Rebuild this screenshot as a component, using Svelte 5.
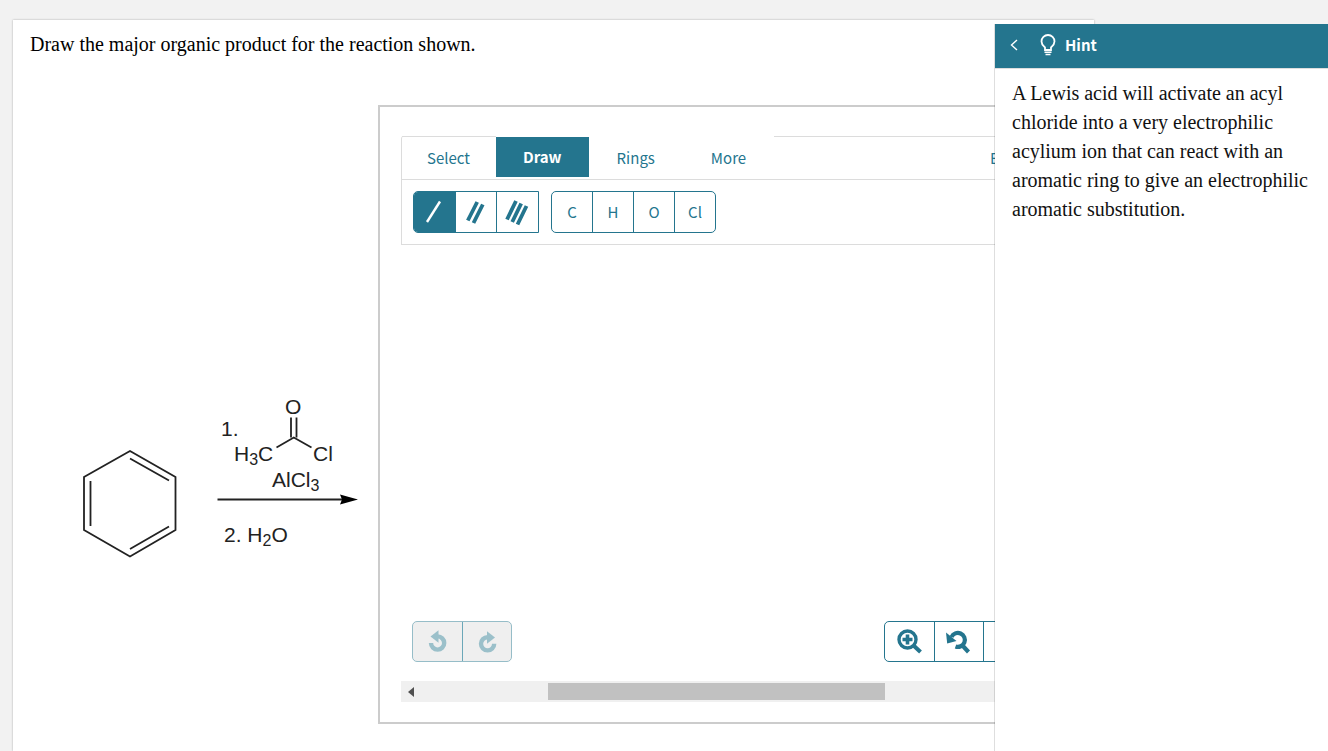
<script>
  let activeTab = $state("Draw");
  let activeBond = $state("Single");
  let hintOpen = $state(true);

  const tabs = ["Select", "Draw", "Rings", "More"];
  const atoms = ["C", "H", "O", "Cl"];
  const bonds = [
    { name: "Single", width: 2.4, path: "M8 25L21 4.500" },
    { name: "Double", width: 3.8, path: "M6.800 23.500L16.200 5M12.500 26L21.800 7.500" },
    { name: "Triple", width: 3.8, path: "M4 22.500L13 4M9.200 25L18.200 6.500M14.500 27.500L23.500 9" },
  ];

  // horizontal scroll position of the canvas, in percent of the track
  const scroll = { start: 20.6, size: 54.8 };
</script>

<main class="page">
  <p class="question">Draw the major organic product for the reaction shown.</p>

  <div class="workspace">
    <svg class="reaction" viewBox="0 0 300 170" role="img" aria-label="Reaction scheme">
      <!-- Benzene -->
      <g class="bond">
        <path d="M60 57L105.500 83v53L60 162.500L14 136V83z" />
        <path d="M60 64.500L99 86.500M99 132.500L60 155M20.500 87v45" />
      </g>

      <!-- Acetyl chloride -->
      <g class="bond">
        <path d="M221 23.500v20M226.500 23.500v20" />
        <path d="M206.500 53.500L223.800 43.500L241.500 53.500" />
      </g>
      <text x="215" y="20">O</text>
      <text x="151" y="42">1.</text>
      <text x="164" y="67">H<tspan class="sub" dy="4">3</tspan><tspan dy="-4">C</tspan></text>
      <text x="243" y="67">Cl</text>
      <text x="202" y="93">AlCl<tspan class="sub" dy="4">3</tspan></text>

      <!-- Arrow -->
      <path class="bond" d="M147.500 105.500H276" />
      <path class="arrow-head" d="M270 100.500L288 105.500L270 110.500L272 105.500z" />
      <text x="154" y="148">2. H<tspan class="sub" dy="4">2</tspan><tspan dy="-4">O</tspan></text>
    </svg>

    <section class="editor">
      <div class="tabs">
        {#each tabs as tab}
          <button class="tab" class:active={activeTab === tab} onclick={() => (activeTab = tab)}>{tab}</button>
        {/each}
        <div class="tabs-rest">
          <button class="tab">Erase</button>
        </div>
      </div>

      <div class="tools">
        <div class="group bonds">
          {#each bonds as bond}
            <button
              class:active={activeBond === bond.name}
              aria-label="{bond.name} bond"
              onclick={() => (activeBond = bond.name)}
            >
              <svg width="30" height="30" viewBox="0 0 30 30">
                <path d={bond.path} stroke="currentColor" stroke-width={bond.width} />
              </svg>
            </button>
          {/each}
        </div>
        <div class="group rounded atoms">
          {#each atoms as atom}
            <button>{atom}</button>
          {/each}
        </div>
      </div>

      <div class="canvas"></div>

      <div class="bottom-bar">
        <div class="group rounded muted">
          <button class="icon-btn" aria-label="Undo" disabled>
            <svg width="24" height="24" viewBox="0 0 24 24">
              <path d="M5 13a6.600 6.600 0 1 0 6.600-6.600" fill="none" stroke="currentColor" stroke-width="4.400" />
              <path d="M4.500 6.500L12.500 .2v12.600z" fill="currentColor" />
            </svg>
          </button>
          <button class="icon-btn" aria-label="Redo" disabled>
            <svg width="24" height="24" viewBox="0 0 24 24">
              <path d="M19.200 13.800a6.600 6.600 0 1 1-6.600-6.600" fill="none" stroke="currentColor" stroke-width="4.400" />
              <path d="M20 7.500L12 1.200v12.600z" fill="currentColor" />
            </svg>
          </button>
        </div>
        <div class="group rounded">
          <button class="icon-btn" aria-label="Zoom in">
            <svg width="26" height="26" viewBox="0 0 26 26">
              <circle cx="10.500" cy="10.500" r="8.500" fill="none" stroke="currentColor" stroke-width="3.400" />
              <path d="M16 16l7.500 7" stroke="currentColor" stroke-width="4" />
              <path d="M10.500 5.500v10M5.500 10.500h10" stroke="currentColor" stroke-width="3.600" />
            </svg>
          </button>
          <button class="icon-btn" aria-label="Reset zoom">
            <svg width="26" height="26" viewBox="0 0 26 26">
              <path d="M5.500 8a7 7 0 1 1 4 9.500" fill="none" stroke="currentColor" stroke-width="4.200" />
              <path d="M0 3.500L1.200 14.500L10.500 12z" fill="currentColor" />
              <path d="M16 16l6.500 7" stroke="currentColor" stroke-width="4.200" />
            </svg>
          </button>
          <button class="icon-btn" aria-label="Zoom out">
            <svg width="26" height="26" viewBox="0 0 26 26">
              <circle cx="10.500" cy="10.500" r="8.500" fill="none" stroke="currentColor" stroke-width="3.400" />
              <path d="M16 16l7.500 7M5.500 10.500h10" stroke="currentColor" stroke-width="3.600" />
            </svg>
          </button>
        </div>
      </div>

      <div class="scrollbar">
        <button class="scroll-arrow" aria-label="Scroll left">
          <svg width="6" height="10" viewBox="0 0 6 10"><path d="M6 0v10L0 5z" fill="#505050" /></svg>
        </button>
        <div class="track">
          <div class="thumb" style="margin-left: {scroll.start}%; width: {scroll.size}%"></div>
        </div>
        <button class="scroll-arrow" aria-label="Scroll right">
          <svg width="6" height="10" viewBox="0 0 6 10"><path d="M0 0v10l6-5z" fill="#505050" /></svg>
        </button>
      </div>
    </section>
  </div>
</main>

{#if hintOpen}
  <aside class="hint">
    <header>
      <button class="back" aria-label="Close hint" onclick={() => (hintOpen = false)}>
        <svg width="8" height="12" viewBox="0 0 8 12">
          <path d="M7 1L1.500 6L7 11" fill="none" stroke="currentColor" stroke-width="1.400" />
        </svg>
      </button>
      <svg class="bulb" width="16" height="22" viewBox="0 0 16 22">
        <path
          d="M5 16v-2.500C3.500 12 1.500 10.500 1.500 7.500a6.500 6.500 0 0 1 13 0c0 3-2 4.500-3.500 6V16z"
          fill="none"
          stroke="currentColor"
          stroke-width="1.800"
        />
        <path d="M4.500 18.200h7M5.500 20.500h5" stroke="currentColor" stroke-width="1.500" />
      </svg>
      <h2>Hint</h2>
    </header>
    <p>
      A Lewis acid will activate an acyl chloride into a very electrophilic acylium ion that can react
      with an aromatic ring to give an electrophilic aromatic substitution.
    </p>
  </aside>
{/if}

<style>
  :global(body) {
    background: #f2f2f2;
    overflow: hidden;
  }

  .page {
    box-sizing: border-box;
    min-height: calc(100vh - 20px);
    margin: 20px 234px 0 13px;
    padding: 9px 15px 24px 17px;
    background: #fff;
    box-shadow: 0 0 2px rgba(0, 0, 0, 0.3);
  }

  .question {
    margin: 0 0 46px;
    font: 20px/30px "Liberation Serif", serif;
    color: #000;
  }

  button {
    margin: 0;
    padding: 0;
    border: 0;
    background: none;
    color: #24758e;
    font: 15px/20px "Noto Sans CJK SC", sans-serif;
    cursor: pointer;
  }

  .workspace {
    display: flex;
    align-items: flex-start;
  }

  /* Reaction scheme */
  .reaction {
    flex: none;
    width: 300px;
    height: 170px;
    margin: 289px 8px 0 40px;
    font: 21px "Liberation Sans", sans-serif;
    fill: #222;
  }

  .reaction .sub {
    font-size: 16px;
  }

  .bond {
    fill: none;
    stroke: #222;
    stroke-width: 1.8px;
  }

  .arrow-head {
    fill: #000;
  }

  /* Structure editor */
  .editor {
    flex: 1;
    min-width: 0;
    padding: 29px 21px 20px;
    border: 2px solid #ccc;
  }

  .tabs {
    display: flex;
    height: 43px;
    border-left: 1px solid #dcdcdc;
    border-radius: 3px 0 0 0;
  }

  .tab {
    height: 41px;
    padding: 2px 28px 0;
    border-top: 1px solid #fff;
  }

  .tab:first-child {
    padding: 2px 26px 0 25px;
    border-top-color: #dcdcdc;
  }

  .tab.active {
    padding: 0 27px;
    background: #24758e;
    background-clip: padding-box;
    color: #fff;
    font-weight: bold;
  }

  .tabs-rest {
    display: flex;
    flex: 1;
    justify-content: flex-end;
    border-top: 1px solid #dcdcdc;
  }

  .tabs-rest .tab {
    padding: 0 28px;
    border-top: 0;
  }

  .tools {
    display: flex;
    gap: 12px;
    padding: 11px;
    border: 1px solid #dcdcdc;
  }

  .group {
    display: flex;
    overflow: hidden;
    border: 1px solid #24758e;
    border-radius: 5px 0 0 5px;
  }

  .group.rounded {
    border-radius: 5px;
  }

  .group button {
    display: flex;
    align-items: center;
    justify-content: center;
  }

  .group button + button {
    border-left: 1px solid #24758e;
  }

  .group button.active {
    background: #24758e;
    color: #fff;
  }

  .bonds,
  .atoms {
    height: 40px;
  }

  .bonds {
    width: 124px;
  }

  .atoms {
    width: 163px;
  }

  .bonds button,
  .atoms button {
    flex: 1;
  }

  .canvas {
    height: 376px;
  }

  .bottom-bar {
    display: flex;
    justify-content: space-between;
    padding: 0 23px 19px 11px;
  }

  .icon-btn {
    width: 49px;
    height: 39px;
  }

  .group.muted {
    border-color: #96bdc8;
    background: #efefef;
  }

  .group.muted button {
    color: #9bc0ca;
  }

  .group.muted button + button {
    border-color: #6ba7b8;
  }

  .scrollbar {
    display: flex;
    height: 21px;
    background: #f0f0f0;
  }

  .scroll-arrow {
    display: flex;
    align-items: center;
    justify-content: center;
    width: 20px;
  }

  .track {
    flex: 1;
    padding: 2px 0;
  }

  .thumb {
    height: 17px;
    background: #c1c1c1;
  }

  /* Hint drawer */
  .hint {
    position: absolute;
    top: 24px;
    right: 0;
    bottom: 0;
    width: 333px;
    border-left: 1px solid rgba(0, 0, 0, 0.13);
    background: #fff;
    background-clip: padding-box;
  }

  .hint header {
    display: flex;
    align-items: center;
    height: 42px;
    padding: 0 15px 2px;
    border-bottom: 1px solid #dedede;
    background: #24758e;
    background-clip: padding-box;
    color: #fff;
  }

  .back {
    display: flex;
    color: #fff;
  }

  .bulb {
    margin: 0 9px 0 22px;
  }

  .hint h2 {
    margin: 0;
    font: bold 15px/20px "Noto Sans CJK SC", sans-serif;
  }

  .hint p {
    margin: 10px 14px 0 17px;
    font: 20px/29px "Liberation Serif", serif;
    color: #111;
  }
</style>
